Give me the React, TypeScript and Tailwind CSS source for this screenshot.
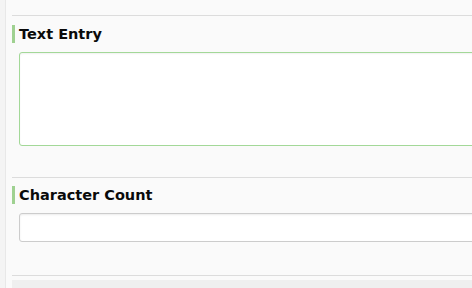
import React from "react";

export default function App() {
  return (
    <div className="w-[472px] h-[288px] overflow-hidden flex bg-[#fafafa]" style={{ fontFamily: '"DejaVu Sans", Verdana, sans-serif' }}>
      <div className="w-[6px] shrink-0 bg-[#f4f4f4] border-r border-[#e8e8e8]" />
      <div className="flex-1 pl-[6px] pt-[15px] min-w-0">
        <div className="w-[600px]">
          <div className="border-t border-[#dcdcdc] pt-[9px] pb-[31px]">
            <div className="border-l-[3px] border-[#9fd191] pl-[4px] h-[18px] leading-[18px] text-[14.5px] font-bold text-[#0a0a0a]">
              Text Entry
            </div>
            <div className="ml-[7px] mt-[9px] h-[94px] w-[560px] bg-white border border-[#a3d898] rounded-[3px] shadow-[inset_0_1px_2px_rgba(0,0,0,0.06)]" />
          </div>
          <div className="border-t border-[#dcdcdc] pt-[8px] pb-[33px]">
            <div className="border-l-[3px] border-[#9fd191] pl-[4px] h-[18px] leading-[18px] text-[14.5px] font-bold text-[#0a0a0a]">
              Character Count
            </div>
            <div className="ml-[7px] mt-[9px] h-[29px] w-[560px] bg-white border border-[#cccccc] rounded-[3px] shadow-[inset_0_1px_2px_rgba(0,0,0,0.08)]" />
          </div>
          <div className="border-t border-[#dcdcdc] pt-[4px]">
            <div className="h-[20px] bg-[#efefef]" />
          </div>
        </div>
      </div>
    </div>
  );
}
